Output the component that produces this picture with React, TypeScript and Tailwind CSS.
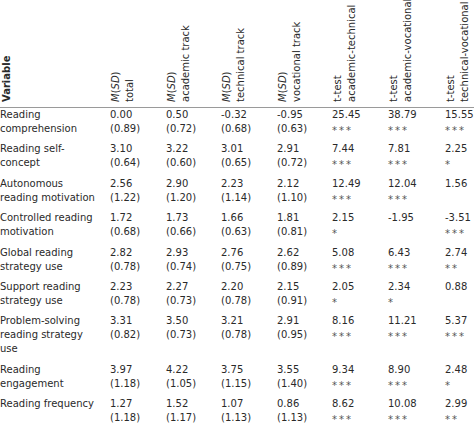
import React from "react";

type Row = { label: string[]; m: [string, string][]; t: [string, string][] };

const rows: Row[] = [
  { label: ["Reading", "comprehension"], m: [["0.00", "(0.89)"], ["0.50", "(0.72)"], ["-0.32", "(0.68)"], ["-0.95", "(0.63)"]], t: [["25.45", "***"], ["38.79", "***"], ["15.55", "***"]] },
  { label: ["Reading self-", "concept"], m: [["3.10", "(0.64)"], ["3.22", "(0.60)"], ["3.01", "(0.65)"], ["2.91", "(0.72)"]], t: [["7.44", "***"], ["7.81", "***"], ["2.25", "*"]] },
  { label: ["Autonomous", "reading motivation"], m: [["2.56", "(1.22)"], ["2.90", "(1.20)"], ["2.23", "(1.14)"], ["2.12", "(1.10)"]], t: [["12.49", "***"], ["12.04", "***"], ["1.56", ""]] },
  { label: ["Controlled reading", "motivation"], m: [["1.72", "(0.68)"], ["1.73", "(0.66)"], ["1.66", "(0.63)"], ["1.81", "(0.81)"]], t: [["2.15", "*"], ["-1.95", ""], ["-3.51", "***"]] },
  { label: ["Global reading", "strategy use"], m: [["2.82", "(0.78)"], ["2.93", "(0.74)"], ["2.76", "(0.75)"], ["2.62", "(0.89)"]], t: [["5.08", "***"], ["6.43", "***"], ["2.74", "**"]] },
  { label: ["Support reading", "strategy use"], m: [["2.23", "(0.78)"], ["2.27", "(0.73)"], ["2.20", "(0.78)"], ["2.15", "(0.91)"]], t: [["2.05", "*"], ["2.34", "*"], ["0.88", ""]] },
  { label: ["Problem-solving", "reading strategy", "use"], m: [["3.31", "(0.82)"], ["3.50", "(0.73)"], ["3.21", "(0.78)"], ["2.91", "(0.95)"]], t: [["8.16", "***"], ["11.21", "***"], ["5.37", "***"]] },
  { label: ["Reading", "engagement"], m: [["3.97", "(1.18)"], ["4.22", "(1.05)"], ["3.75", "(1.15)"], ["3.55", "(1.40)"]], t: [["9.34", "***"], ["8.90", "***"], ["2.48", "*"]] },
  { label: ["Reading frequency"], m: [["1.27", "(1.18)"], ["1.52", "(1.17)"], ["1.07", "(1.13)"], ["0.86", "(1.13)"]], t: [["8.62", "***"], ["10.08", "***"], ["2.99", "**"]] },
];

const grid = "grid grid-cols-[110px_56px_55px_56px_55px_56px_57px_60px]";

function VHead({ lines }: { lines: React.ReactNode[] }) {
  return (
    <div className="h-[102px] [writing-mode:vertical-rl] rotate-180 whitespace-nowrap leading-[14px] -ml-[1px]">
      {lines.map((l, i) => (
        <div key={i}>{l}</div>
      ))}
    </div>
  );
}

const MSD = (
  <span>
    <i>M</i>(<i>SD</i>)
  </span>
);

export default function App() {
  return (
    <div
      className="w-[474px] h-[424px] overflow-hidden bg-white text-[#2a2a2a] text-[10px] leading-[14px]"
      style={{ fontFamily: '"DejaVu Sans", Verdana, sans-serif' }}
    >
      <div className={`${grid} items-end pb-[5px] border-b-[1.5px] border-[#9a9a9a]`}>
        <div className="h-[102px] [writing-mode:vertical-rl] rotate-180 font-bold leading-[14px]">Variable</div>
        <VHead lines={[MSD, "total"]} />
        <VHead lines={[MSD, "academic track"]} />
        <VHead lines={[MSD, "technical track"]} />
        <VHead lines={[MSD, "vocational track"]} />
        <VHead lines={["t-test", "academic-technical"]} />
        <VHead lines={["t-test", "academic-vocational"]} />
        <VHead lines={["t-test", "technical-vocational"]} />
      </div>
      {rows.map((r, i) => (
        <div key={i} className={`${grid} pb-[6.4px]`}>
          <div className="whitespace-nowrap">
            {r.label.map((l, j) => (
              <div key={j}>{l}</div>
            ))}
          </div>
          {r.m.map(([a, b], j) => (
            <div key={"m" + j} className="whitespace-nowrap">
              <div>{a}</div>
              <div>{b}</div>
            </div>
          ))}
          {r.t.map(([a, b], j) => (
            <div key={"t" + j} className="whitespace-nowrap">
              <div>{a}</div>
              <div className="h-[14px] text-[#555] tracking-[2px] relative top-[2px]">{b}</div>
            </div>
          ))}
        </div>
      ))}
    </div>
  );
}
